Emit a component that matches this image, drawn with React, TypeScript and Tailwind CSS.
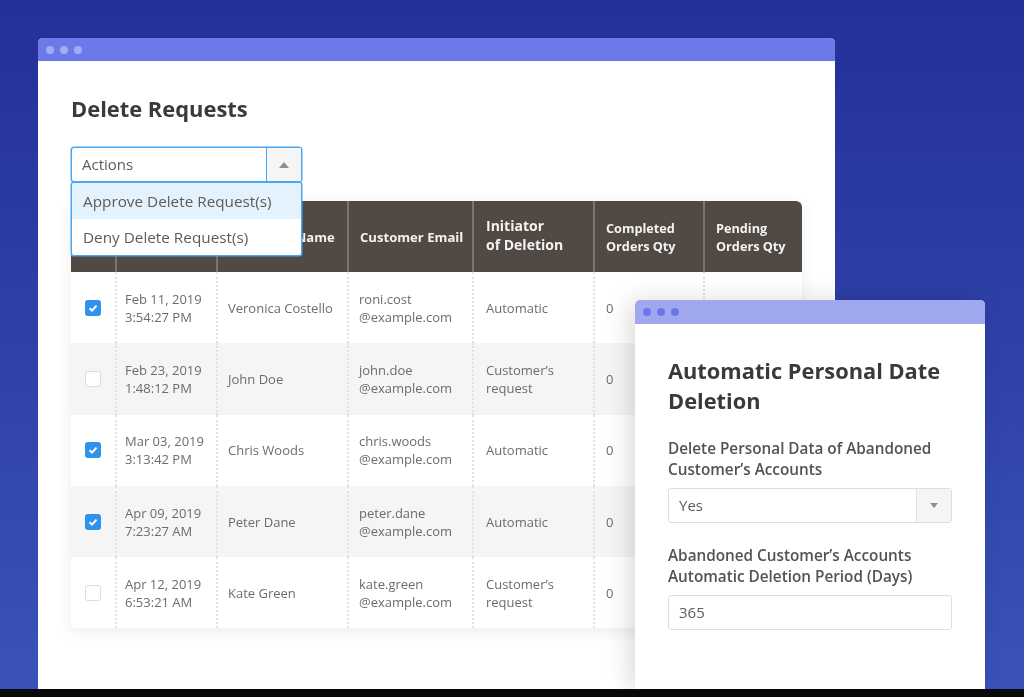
import React from 'react';

interface Request {
  date: string;
  time: string;
  name: string;
  email: string[];
  initiator: string[];
  checked: boolean;
}

const requests: Request[] = [
  { date: 'Feb 11, 2019', time: '3:54:27 PM', name: 'Veronica Costello', email: ['roni.cost', '@example.com'], initiator: ['Automatic'], checked: true },
  { date: 'Feb 23, 2019', time: '1:48:12 PM', name: 'John Doe', email: ['john.doe', '@example.com'], initiator: ['Customer’s', 'request'], checked: false },
  { date: 'Mar 03, 2019', time: '3:13:42 PM', name: 'Chris Woods', email: ['chris.woods', '@example.com'], initiator: ['Automatic'], checked: true },
  { date: 'Apr 09, 2019', time: '7:23:27 AM', name: 'Peter Dane', email: ['peter.dane', '@example.com'], initiator: ['Automatic'], checked: true },
  { date: 'Apr 12, 2019', time: '6:53:21 AM', name: 'Kate Green', email: ['kate.green', '@example.com'], initiator: ['Customer’s', 'request'], checked: false },
];

const Lines = ({ lines }: { lines: string[] }) => (
  <>
    {lines.map((line) => (
      <div key={line}>{line}</div>
    ))}
  </>
);

const Checkbox = ({ checked }: { checked: boolean }) =>
  checked ? (
    <div className="flex h-4 w-4 items-center justify-center rounded-[3px] bg-[#2f93ee]">
      <svg viewBox="0 0 16 16" className="h-4 w-4" fill="none" stroke="white" strokeWidth="2">
        <path d="M4.5 8.3 7 10.6 11.5 5.6" />
      </svg>
    </div>
  ) : (
    <div className="h-4 w-4 rounded-[3px] border border-[#dcdcdc] bg-white" />
  );

const Caret = ({ up }: { up?: boolean }) => (
  <svg viewBox="0 0 10 6" className={up ? 'h-[6px] w-[10px] fill-[#8f8f8f]' : 'h-[5px] w-[8px] fill-[#8f8f8f]'}>
    <path d={up ? 'M5 0 10 6H0Z' : 'M0 0H10L5 6Z'} />
  </svg>
);

const Dots = ({ color }: { color: string }) => (
  <div className={`h-[8px] w-[8px] rounded-full ${color}`} />
);

const headCell = 'border-l-2 border-[#7a736e] pr-0 pl-[11px] align-middle text-left text-[12.7px] leading-[18px] font-bold text-[#f4f3f2]';
const bodyCell = 'border-l-2 border-dotted border-[#e2e2e2] px-[10px] align-middle text-[13px] leading-[18px] text-[#6f6b68]';

const RequestsTable = () => (
  <div className="mt-[19px] w-[731px] overflow-hidden rounded-[6px] shadow-[0_4px_16px_rgba(0,0,0,0.08)]">
    <table className="w-[731px] table-fixed border-collapse">
      <colgroup>
        <col className="w-[45px]" />
        <col className="w-[101px]" />
        <col className="w-[131px]" />
        <col className="w-[125px]" />
        <col className="w-[121px]" />
        <col className="w-[110px]" />
        <col className="w-[98px]" />
      </colgroup>
      <thead>
        <tr className="h-[71px] bg-[#514943]">
          <th />
          <th className={headCell} />
          <th className={`${headCell} text-[13px]`}>Customer Name</th>
          <th className={`${headCell} pl-[10px] text-[13.1px]`}>Customer Email</th>
          <th className={`${headCell} pb-[4px] pl-[12px] text-[14px] leading-[19px]`}>
            Initiator
            <br />
            of Deletion
          </th>
          <th className={headCell}>
            Completed
            <br />
            Orders Qty
          </th>
          <th className={`${headCell} pl-[10px]`}>
            Pending
            <br />
            Orders Qty
          </th>
        </tr>
      </thead>
      <tbody>
        {requests.map((r, i) => (
          <tr key={r.name} className={`h-[71.3px] ${i % 2 === 1 ? 'bg-[#f5f5f5]' : 'bg-white'}`}>
            <td className="pl-[14px] align-middle">
              <Checkbox checked={r.checked} />
            </td>
            <td className={`${bodyCell} pl-[8px] text-[12.5px]`}>
              <div>{r.date}</div>
              <div>{r.time}</div>
            </td>
            <td className={bodyCell}>{r.name}</td>
            <td className={`${bodyCell} text-[12.6px]`}>
              <Lines lines={r.email} />
            </td>
            <td className={`${bodyCell} pl-[12px]`}>
              <Lines lines={r.initiator} />
            </td>
            <td className={`${bodyCell} pl-[11px]`}>0</td>
            <td className={bodyCell} />
          </tr>
        ))}
      </tbody>
    </table>
  </div>
);

const ActionsSelect = () => (
  <div className="relative z-10 w-[231px]">
    <div className="flex h-[35px] items-stretch rounded-[3px] border border-[#4ba6f2] bg-white shadow-[0_0_0_0.5px_#4ba6f2]">
      <div className="flex flex-1 items-center pl-[10px] text-[15px] text-[#5f5b58]">Actions</div>
      <div className="flex w-[35px] items-center justify-center border-l border-[#4ba6f2] bg-[#f5f5f5]">
        <Caret up />
      </div>
    </div>
    <div className="absolute top-[35px] left-0 w-[231px] overflow-hidden rounded-[3px] border border-[#4ba6f2] bg-white text-[15.3px] text-[#5f5b58] shadow-[0_0_0_0.5px_#4ba6f2]">
      <div className="flex h-[36px] items-center bg-[#e3f2fd] pl-[11px]">Approve Delete Request(s)</div>
      <div className="flex h-[36px] items-center pl-[11px]">Deny Delete Request(s)</div>
    </div>
  </div>
);

const SettingsWindow = () => (
  <div className="absolute top-[300px] left-[635px] flex h-[389px] w-[350px] flex-col overflow-hidden rounded-t-[5px] bg-white shadow-[-6px_0_24px_rgba(0,0,0,0.14)]">
    <div className="flex h-[24px] shrink-0 items-center gap-[6px] bg-[#9fa8ef] pl-[8px]">
      <Dots color="bg-[#6a78ea]" />
      <Dots color="bg-[#6a78ea]" />
      <Dots color="bg-[#6a78ea]" />
    </div>
    <div className="px-[33px] pt-[32px]">
      <h2 className="text-[21.8px] leading-[30px] font-bold text-[#3a3a3a]">Automatic Personal Date Deletion</h2>
      <p className="mt-[22px] text-[15.3px] leading-[21px] font-semibold text-[#55524f]">
        Delete Personal Data of Abandoned Customer’s Accounts</p>
      <div className="mt-[8px] flex h-[35px] w-[284px] rounded-[3px] border border-[#dedede]">
        <div className="flex flex-1 items-center pl-[10px] text-[15px] text-[#5f5b58]">Yes</div>
        <div className="flex w-[35px] items-center justify-center border-l border-[#e4e4e4] bg-[#f5f5f5]">
          <Caret />
        </div>
      </div>
      <p className="mt-[22px] text-[15.3px] leading-[21px] font-semibold text-[#55524f]">
        Abandoned Customer’s Accounts Automatic Deletion Period (Days)</p>
      <div className="mt-[8px] flex h-[35px] w-[284px] items-center rounded-[3px] border border-[#dedede] pl-[10px] text-[15px] text-[#5f5b58]">
        365
      </div>
    </div>
  </div>
);

const App = () => (
  <div className="relative h-[697px] w-[1024px] overflow-hidden font-['Open_Sans',sans-serif] blur-[0.4px]">
    <div className="h-[689px] bg-gradient-to-b from-[#252f99] to-[#3a52b9] pt-[38px] pl-[38px]">
      <div className="flex h-[651px] w-[797px] flex-col overflow-hidden rounded-t-[5px] bg-white">
        <div className="flex h-[23px] shrink-0 items-center gap-[6px] bg-[#6c7ae9] pl-[8px]">
          <Dots color="bg-[#a3acf3]" />
          <Dots color="bg-[#a3acf3]" />
          <Dots color="bg-[#a3acf3]" />
        </div>
        <div className="px-[33px] pt-[33px]">
          <h1 className="text-[21.9px] leading-[30px] font-bold text-[#3a3a3a]">Delete Requests</h1>
          <div className="mt-[23px]">
            <ActionsSelect />
          </div>
          <RequestsTable />
        </div>
      </div>
    </div>
    <div className="h-[8px] bg-[#0a0a0a]" />
    <SettingsWindow />
  </div>
);

export default App;
